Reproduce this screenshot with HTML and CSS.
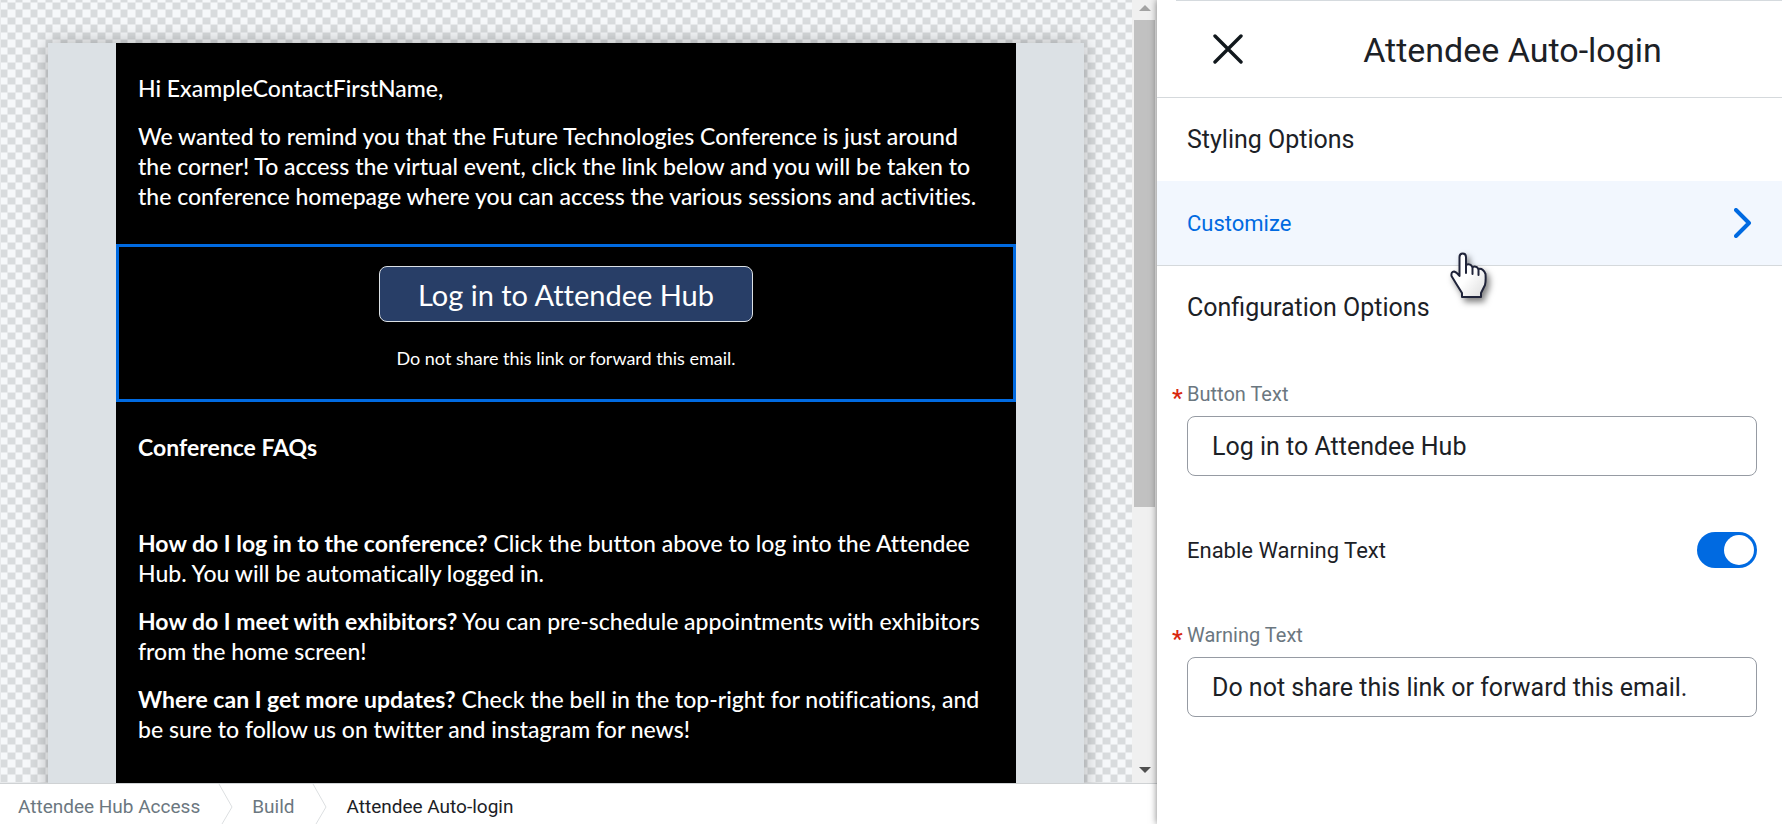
FILE: index.html
```html
<!DOCTYPE html>
<html lang="en">
<head>
    <meta charset="UTF-8">
    <meta name="viewport" content="width=device-width, initial-scale=1.0">
    <title>Attendee Auto-login</title>
    <link rel="stylesheet" href="styles.css">
</head>
<body>
    <div class="app">
        <div class="editor">
            <div class="canvas">
                <main class="preview">
                    <div class="sheet">
                        <article class="email">
                            <section class="block">
                                <p>Hi ExampleContactFirstName,</p>
                                <p>We wanted to remind you that the Future Technologies Conference is just around<br>the corner! To access the virtual event, click the link below and you will be taken to<br>the conference homepage where you can access the various sessions and activities.</p>
                            </section>
                            <section class="login-block">
                                <a href="#" class="login-link">Log in to Attendee Hub</a>
                                <p class="warning">Do not share this link or forward this email.</p>
                            </section>
                            <section class="block">
                                <p><b>Conference FAQs</b></p>
                                <p class="spacer"></p>
                                <p><b>How do I log in to the conference?</b> Click the button above to log into the Attendee<br>Hub. You will be automatically logged in.</p>
                                <p><b>How do I meet with exhibitors?</b> You can pre-schedule appointments with exhibitors<br>from the home screen!</p>
                                <p><b>Where can I get more updates?</b> Check the bell in the top-right for notifications, and<br>be sure to follow us on twitter and instagram for news!</p>
                            </section>
                        </article>
                    </div>
                </main>
                <div class="scrollbar">
                    <svg class="arrow" viewBox="0 0 12 6"><path d="M6 0l6 6H0z" fill="#a3a3a3"/></svg>
                    <div class="track"><div class="thumb"></div></div>
                    <svg class="arrow" viewBox="0 0 12 6"><path d="M0 0h12L6 6z" fill="#505050"/></svg>
                </div>
            </div>
            <nav class="breadcrumb">
                <a href="#">Attendee Hub Access</a>
                <svg class="divider" viewBox="0 0 16 40"><path d="M1 0l13 23L4 40" fill="none" stroke="#dcdfe1"/></svg>
                <a href="#">Build</a>
                <svg class="divider" viewBox="0 0 16 40"><path d="M1 0l13 23L4 40" fill="none" stroke="#dcdfe1"/></svg>
                <span class="current">Attendee Auto-login</span>
            </nav>
        </div>

        <aside class="panel">
            <header class="panel-header">
                <button class="close" aria-label="Close">
                    <svg viewBox="0 0 30 30"><path d="M2 2l26 26M28 2L2 28" fill="none" stroke="#11181d" stroke-width="3.4" stroke-linecap="round"/></svg>
                </button>
                <h1>Attendee Auto-login</h1>
            </header>
            <h2>Styling Options</h2>
            <button class="customize">
                Customize
                <svg class="chevron" viewBox="0 0 18 30"><path d="M2 2l13 13L2 28" fill="none" stroke="#006ae1" stroke-width="4" stroke-linecap="round" stroke-linejoin="round"/></svg>
                <!-- hand pointer over the hovered row -->
                <svg class="pointer" viewBox="0 0 38 48">
                    <defs>
                        <linearGradient id="hand" x1="0" y1="0" x2="1" y2="1">
                            <stop offset="0.5" stop-color="#fff"/>
                            <stop offset="1" stop-color="#dcdcdc"/>
                        </linearGradient>
                    </defs>
                    <path d="M9.5 23V5Q9.500 1.500 12.700 1.500T16 5V13Q20 11 22.500 15Q26.500 13.500 28.500 17Q33 16 35.500 22Q36 29 35 33L31 41V45H12V41L7 33L1.500 24Q1 19.500 4 19.500Q6.500 20 9.500 24Z" fill="url(#hand)" stroke="#20243a" stroke-width="2" stroke-linejoin="round"/>
                    <path d="M16 12v9M22.500 15v7M28.500 17v6" fill="none" stroke="#20243a" stroke-width="2" stroke-linecap="round"/>
                </svg>
            </button>
            <h2>Configuration Options</h2>
            <form class="options">
                <label class="field-label" for="button-text">Button Text</label>
                <input class="text-box" type="text" id="button-text" value="Log in to Attendee Hub" required>
                <div class="toggle-row">
                    <label for="enable-warning">Enable Warning Text</label>
                    <input class="toggle" type="checkbox" id="enable-warning" checked>
                </div>
                <label class="field-label" for="warning-text">Warning Text</label>
                <input class="text-box" type="text" id="warning-text" value="Do not share this link or forward this email." required>
            </form>
        </aside>
    </div>
</body>
</html>
```
FILE: styles.css
```css
* {
    box-sizing: border-box;
}
body {
    margin: 0;
    color: #1c2126;
    font-family: Roboto, "Liberation Sans", sans-serif;
}
h1, h2, p {
    margin: 0;
    font-weight: 400;
}
a {
    color: inherit;
    text-decoration: none;
}
button, input {
    margin: 0;
    font-family: inherit;
    color: inherit;
}
.app {
    display: flex;
    height: 100vh;
    overflow: hidden;
}

/* Email preview */
.editor {
    flex: 1;
    min-width: 0;
    display: flex;
    flex-direction: column;
}
.canvas {
    flex: 1;
    min-height: 0;
    display: flex;
}
.preview {
    flex: 1;
    min-width: 0;
    padding: 43px 48px 0;
    overflow: hidden;
    /* checkerboard with a thin grid over it */
    background:
        linear-gradient(#e8eaec 1px, transparent 1px 7px, #e8eaec 7px 8px, transparent 8px) 0 2px / 15px 15px,
        linear-gradient(90deg, #e8eaec 1px, transparent 1px 7px, #e8eaec 7px 8px, transparent 8px) 0 2px / 15px 15px,
        repeating-conic-gradient(#d8dbdd 0 25%, #f6f8fa 0 50%) 0 2px / 15px 15px;
}
.sheet {
    min-height: 100%;
    padding: 0 68px;
    background: #dce1e5;
    box-shadow: 0 0 18px rgba(0, 0, 0, 0.3);
}
.email {
    min-height: 800px;
    background: #000;
    color: #fff;
    font-family: Lato, "Noto Sans", sans-serif;
    font-size: 23px;
    font-weight: 500;
    font-variant-ligatures: none;
    line-height: 30px;
    white-space: nowrap;
}
.email p {
    font-weight: 500;
}
.block {
    display: flex;
    flex-direction: column;
    gap: 18px;
    padding: 30px 22px 33px;
}
.spacer {
    height: 30px;
}
.login-block {
    display: flex;
    flex-direction: column;
    align-items: center;
    gap: 21px;
    padding: 19px 0 26px;
    border: 3px solid #006ae1;
}
.login-link {
    padding: 12px 38px 10px;
    border: 1px solid #dce1e5;
    border-radius: 8px;
    background: #283e67;
    font-size: 29px;
    font-weight: 400;
    line-height: 32px;
}
.email .warning {
    font-size: 18px;
    font-weight: 400;
}
.scrollbar {
    width: 25px;
    display: flex;
    flex-direction: column;
    align-items: center;
    padding: 5px 2px 10px;
    background: #f0f0f0;
}
.arrow {
    width: 12px;
    height: 6px;
}
.track {
    flex: 1;
    align-self: stretch;
    padding: 9px 0;
}
.thumb {
    height: 66%;
    background: #c1c1c1;
}
.breadcrumb {
    display: flex;
    align-items: center;
    gap: 18px;
    height: 41px;
    padding-left: 18px;
    border-top: 1px solid #cfd2d4;
    background: #fff;
    color: #6b7780;
    font-size: 19px;
}
.breadcrumb a, .current {
    padding-top: 4px;
}
.divider {
    width: 16px;
    height: 40px;
}
.current {
    color: #1c2126;
}

/* Settings panel */
.panel {
    position: relative;
    width: 625px;
    background: #fff;
    box-shadow: 0 0 7px rgba(0, 0, 0, 0.5);
}
.panel-header {
    display: flex;
    align-items: center;
    height: 98px;
    padding-left: 56px;
    border-bottom: 1px solid #d5d9dc;
}
.panel-header::before {
    content: "";
    position: absolute;
    top: 0;
    left: 19px;
    right: 0;
    height: 1px;
    background: #d5dade;
}
.panel-header h1 {
    flex: 1;
    padding-top: 2px;
    font-size: 34px;
    text-align: center;
}
.close {
    width: 30px;
    height: 30px;
    padding: 0;
    border: 0;
    background: none;
}
.panel h2 {
    padding: 0 30px;
    font-size: 25px;
    line-height: 83px;
}
.customize {
    position: relative;
    display: flex;
    align-items: center;
    justify-content: space-between;
    width: 100%;
    height: 85px;
    padding: 0 30px;
    border: 0;
    border-bottom: 1px solid #d5d9dc;
    background: #f2f7fe;
    color: #006ae1;
    font-size: 22px;
}
.chevron {
    width: 18px;
    height: 30px;
}
.pointer {
    position: absolute;
    top: 71px;
    left: 293px;
    width: 38px;
    height: 48px;
    filter: drop-shadow(3px 4px 3px rgba(0, 0, 0, 0.5));
}
.options {
    display: flex;
    flex-direction: column;
    padding: 23px 25px 0 30px;
}
.field-label {
    position: relative;
    color: #6b7780;
    font-size: 20px;
    line-height: 44px;
}
.field-label::before {
    content: "*";
    position: absolute;
    top: 4px;
    left: -15px;
    color: #d9280e;
    font-size: 24px;
    font-weight: 500;
}
.text-box {
    height: 60px;
    padding: 0 24px;
    border: 1px solid #969ba3;
    border-radius: 8px;
    font-size: 25px;
}
.toggle-row {
    display: flex;
    align-items: center;
    justify-content: space-between;
    margin: 56px 0 45px;
    font-size: 22px;
}
.toggle {
    appearance: none;
    width: 60px;
    height: 36px;
    padding: 3px;
    border-radius: 18px;
    background: #006ae1;
}
.toggle::before {
    content: "";
    display: block;
    width: 30px;
    height: 30px;
    margin-left: 24px;
    border-radius: 50%;
    background: #fff;
}
```
